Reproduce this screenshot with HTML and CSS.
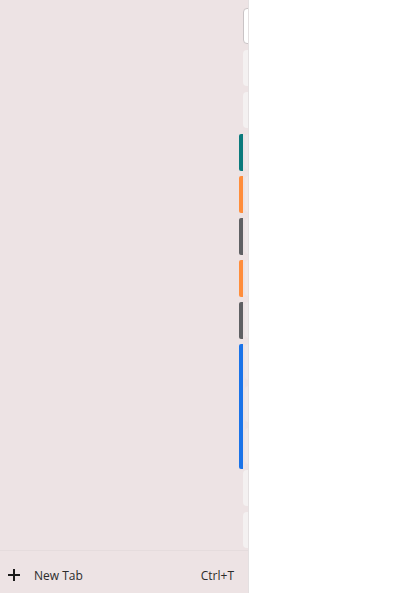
FILE: index.html
```html
<!DOCTYPE html>
<html>
<head>
<meta charset="utf-8">
<link rel="stylesheet" href="styles.css">
</head>
<body>
<div class="app">
  <aside class="sidebar">
    <div class="tabs">
      <div class="row"><div class="card active"></div></div>
      <div class="row"><div class="card"></div></div>
      <div class="row"><div class="card"></div></div>
      <div class="row"><div class="bar teal"></div><div class="card faint"></div></div>
      <div class="row"><div class="bar orange"></div><div class="card faint"></div></div>
      <div class="row"><div class="bar gray"></div><div class="card faint"></div></div>
      <div class="row"><div class="bar orange"></div><div class="card faint"></div></div>
      <div class="row"><div class="bar gray"></div><div class="card faint"></div></div>
      <div class="row group"><div class="bar blue"></div>
        <div class="stack">
          <div class="card faint"></div>
          <div class="card faint"></div>
          <div class="card faint"></div>
        </div>
      </div>
      <div class="row"><div class="card"></div></div>
      <div class="row"><div class="card"></div></div>
    </div>
    <div class="footer">
      <svg class="plus" width="12" height="12" viewBox="0 0 12 12"><path d="M6 0v12M0 6h12" stroke="#1a1a1a" stroke-width="2" fill="none"/></svg>
      <span class="label">New Tab</span>
      <span class="shortcut">Ctrl+T</span>
    </div>
  </aside>
  <main class="content"></main>
</div>
</body>
</html>
```

FILE: styles.css
```css
html, body {
  margin: 0;
  padding: 0;
  height: 100%;
}
body {
  font-family: "Open Sans", "Liberation Sans", sans-serif;
  background: #ffffff;
}
.app {
  display: flex;
  height: 593px;
}
.sidebar {
  width: 248px;
  flex: none;
  background: #ede3e4;
  border-right: 1px solid #e4e0e1;
  display: flex;
  flex-direction: column;
  overflow: hidden;
}
.tabs {
  flex: 1;
  padding-top: 8px;
  display: flex;
  flex-direction: column;
  gap: 6px;
  overflow: hidden;
}
.row {
  height: 36px;
  display: flex;
  padding-left: 243px;
  flex: none;
}
.row .bar + .card,
.row .bar + .stack {
  margin-left: 2px;
}
.row:has(.bar) {
  padding-left: 239px;
}
.row.group {
  height: 120px;
}
.stack {
  display: flex;
  flex-direction: column;
  gap: 6px;
}
.card {
  width: 100px;
  height: 36px;
  flex: none;
  border-radius: 4px;
  background: #f4f1f1;
  box-sizing: border-box;
}
.card.faint {
  background: #efe9ea;
}
.card.active {
  background: #ffffff;
  border: 1px solid #c9c3c5;
}
.bar {
  width: 4px;
  flex: none;
  border-radius: 2px 0 0 2px;
  height: 37px;
}
.group .bar {
  height: 125px;
}
.teal { background: #0b7a7c; }
.orange { background: #ff8d3b; }
.gray { background: #5f6063; }
.blue { background: #1a73e8; }
.footer {
  height: 43px;
  flex: none;
  box-sizing: border-box;
  border-top: 1px solid #e5dcdd;
  display: flex;
  align-items: center;
  padding: 6px 14px 0 8px;
  font-size: 12px;
  color: #2b2b2b;
}
.plus {
  flex: none;
}
.label {
  margin-left: 14px;
  flex: 1;
}
.shortcut {
  color: #2b2b2b;
}
.content {
  flex: 1;
  background: #ffffff;
}
```
